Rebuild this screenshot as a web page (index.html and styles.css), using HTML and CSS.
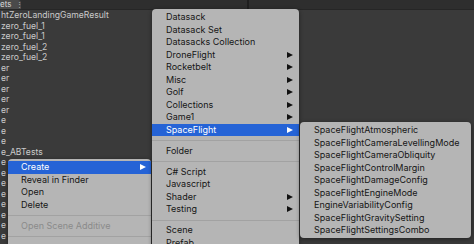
FILE: index.html
```html
<!DOCTYPE html>
<html>
<head>
<meta charset="utf-8">
<link rel="stylesheet" href="styles.css">
</head>
<body>
<div class="app">
  <div class="header">
    <div class="tab"><span class="tab-label">ets</span><span class="tab-menu">⋮</span></div>
    <div class="header-fill"></div>
    <div class="header-divider"></div>
    <div class="header-fill"></div>
  </div>
  <div class="main">
    <div class="list">
      <div class="row">htZeroLandingGameResult</div>
      <div class="row">zero_fuel_1</div>
      <div class="row">zero_fuel_1</div>
      <div class="row">zero_fuel_2</div>
      <div class="row">zero_fuel_2</div>
      <div class="row">er</div>
      <div class="row">er</div>
      <div class="row">er</div>
      <div class="row">er</div>
      <div class="row">er</div>
      <div class="row">e</div>
      <div class="row">e</div>
      <div class="row">e</div>
      <div class="row">e_ABTests</div>
      <div class="row">e</div>
      <div class="row">e</div>
      <div class="row">e</div>
      <div class="row">e</div>
      <div class="row">e</div>
      <div class="row">e</div>
      <div class="row">e</div>
      <div class="row">e</div>
      <div class="row">e</div>
    </div>
  </div>
</div>

<div class="menu ctx">
  <div class="item active">Create<span class="arrow white"></span></div>
  <div class="item">Reveal in Finder</div>
  <div class="item">Open</div>
  <div class="item">Delete</div>
  <div class="sep"></div>
  <div class="item disabled">Open Scene Additive</div>
  <div class="sep"></div>
  <div class="item">&nbsp;</div>
</div>

<div class="menu create">
  <div class="item">Datasack</div>
  <div class="item">Datasack Set</div>
  <div class="item">Datasacks Collection</div>
  <div class="item">DroneFlight<span class="arrow"></span></div>
  <div class="item">Rocketbelt<span class="arrow"></span></div>
  <div class="item">Misc<span class="arrow"></span></div>
  <div class="item">Golf<span class="arrow"></span></div>
  <div class="item">Collections<span class="arrow"></span></div>
  <div class="item">Game1<span class="arrow"></span></div>
  <div class="item active">SpaceFlight<span class="arrow white"></span></div>
  <div class="sep"></div>
  <div class="item">Folder</div>
  <div class="sep"></div>
  <div class="item">C# Script</div>
  <div class="item">Javascript</div>
  <div class="item">Shader<span class="arrow"></span></div>
  <div class="item">Testing<span class="arrow"></span></div>
  <div class="sep"></div>
  <div class="item">Scene</div>
  <div class="item">Prefab</div>
</div>

<div class="menu space">
  <div class="item">SpaceFlightAtmospheric</div>
  <div class="item">SpaceFlightCameraLevellingMode</div>
  <div class="item">SpaceFlightCameraObliquity</div>
  <div class="item">SpaceFlightControlMargin</div>
  <div class="item">SpaceFlightDamageConfig</div>
  <div class="item">SpaceFlightEngineMode</div>
  <div class="item">EngineVariabilityConfig</div>
  <div class="item">SpaceFlightGravitySetting</div>
  <div class="item">SpaceFlightSettingsCombo</div>
</div>
</body>
</html>
```
FILE: styles.css
```css
html, body {
  margin: 0;
  padding: 0;
}
body {
  width: 474px;
  height: 244px;
  overflow: hidden;
  background: #3a3a3a;
  font-family: Inter, "Liberation Sans", sans-serif;
  position: relative;
}
.app {
  display: flex;
  flex-direction: column;
  height: 244px;
}
.header {
  height: 9px;
  display: flex;
  background: #2e2e2e;
  border-bottom: 1px solid #262626;
}
.tab {
  width: 21px;
  background: #4a4a4a;
  border-top-right-radius: 3px;
  display: flex;
  align-items: center;
  color: #d8d8d8;
  font-size: 8px;
  line-height: 9px;
}
.tab-label {
  margin-left: 0px;
}
.tab-menu {
  margin-left: 5px;
  font-size: 7px;
  color: #bbbbbb;
}
.header-fill {
  flex: 1;
}
.header-divider {
  width: 2px;
  background: #1f1f1f;
}
.main {
  flex: 1;
  display: flex;
  background: #3a3a3a;
}
.list {
  width: 160px;
  padding-top: 0px;
}
.row {
  height: 10.5px;
  line-height: 10.5px;
  font-size: 8.6px;
  color: #cacaca;
  padding-left: 1px;
  white-space: nowrap;
}

.menu {
  position: absolute;
  background: #b5b5b5;
  border-radius: 4px;
  box-shadow: 0 1px 4px rgba(0,0,0,0.45);
  padding: 2px 0;
  font-size: 9px;
  color: #151515;
  overflow: hidden;
}
.item {
  height: 12.5px;
  line-height: 12.5px;
  padding-left: 14px;
  position: relative;
  white-space: nowrap;
}
.item.active {
  background: #2563d6;
  color: #ffffff;
}
.item.disabled {
  color: #8a8a8a;
}
.sep {
  height: 8.5px;
  position: relative;
}
.sep::after {
  content: "";
  position: absolute;
  left: 0;
  right: 0;
  top: 4px;
  height: 1px;
  background: #a2a2a2;
}
.arrow {
  position: absolute;
  right: 6px;
  top: 3px;
  width: 0;
  height: 0;
  border-top: 3.5px solid transparent;
  border-bottom: 3.5px solid transparent;
  border-left: 6px solid #111111;
}
.arrow.white {
  border-left-color: #ffffff;
}
.ctx {
  left: 8px;
  top: 159px;
  width: 143px;
  padding-left: 0;
}
.ctx .item {
  padding-left: 13px;
}
.ctx .arrow {
  right: 5px;
}
.create {
  left: 152px;
  top: 9px;
  width: 147px;
}
.space {
  left: 300px;
  top: 122px;
  width: 171px;
  height: 112px;
}
```
